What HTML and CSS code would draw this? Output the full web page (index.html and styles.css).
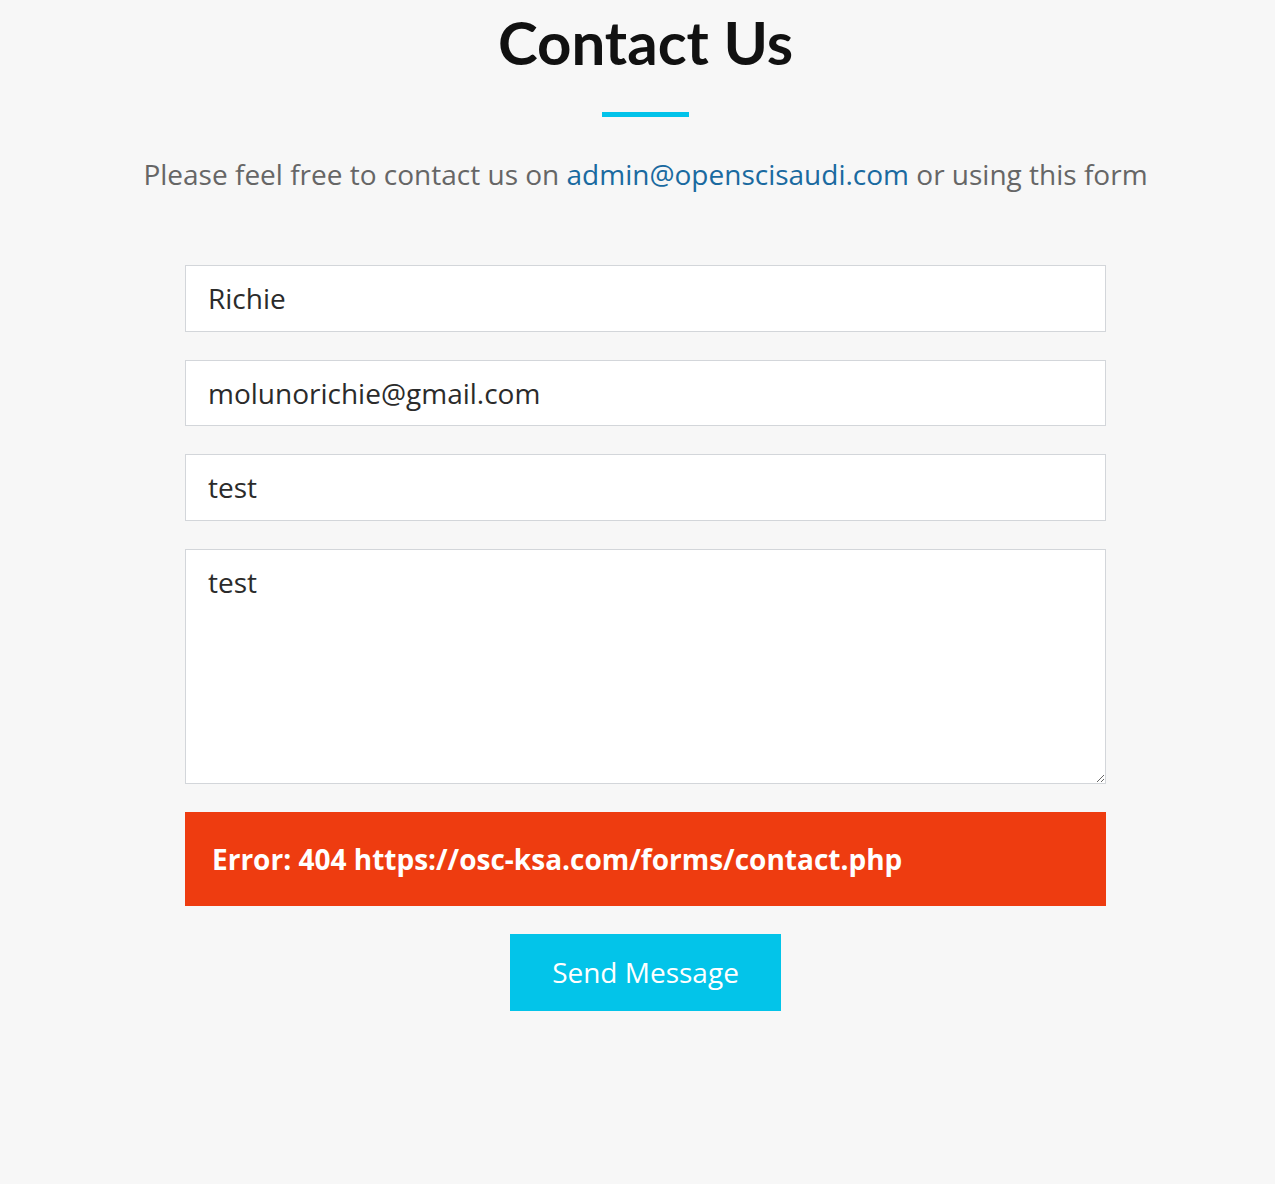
FILE: index.html
```html
<!DOCTYPE html>
<html lang="en">
<head>
<meta charset="utf-8">
<title>Contact Us</title>
<link rel="stylesheet" href="styles.css">
</head>
<body>
<main class="page">
  <section class="contact">
    <h1 class="contact-title">Contact Us</h1>
    <div class="title-bar"></div>
    <p class="contact-lead">Please feel free to contact us on <a class="contact-link" href="#">admin@openscisaudi.com</a> or using this form</p>
    <form class="contact-form">
      <input class="field" type="text" value="Richie">
      <input class="field" type="email" value="molunorichie@gmail.com">
      <input class="field" type="text" value="test">
      <textarea class="field field-area">test</textarea>
      <div class="form-error">Error: 404 https://osc-ksa.com/forms/contact.php</div>
      <div class="form-actions">
        <button class="send-btn" type="button">Send Message</button>
      </div>
    </form>
  </section>
</main>
</body>
</html>
```

FILE: styles.css
```css
* { box-sizing: border-box; }
html, body { margin: 0; padding: 0; }
body {
  background: #f7f7f7;
  font-family: "Open Sans", "Liberation Sans", sans-serif;
  color: #333;
  min-height: 1184px;
}
.page {
  padding-left: 16px;
}
.contact {
  display: flex;
  flex-direction: column;
  align-items: center;
  text-align: center;
}
.contact-title {
  font-family: Lato, "Open Sans", sans-serif;
  font-weight: 700;
  font-size: 60px;
  line-height: 72px;
  margin: 6px 0 0;
  color: #111;
  letter-spacing: 0;
}
.title-bar {
  width: 87px;
  height: 5px;
  background: #02c3ea;
  margin-top: 34px;
}
.contact-lead {
  font-size: 28px;
  line-height: 40px;
  color: #666;
  margin: 37px 0 0;
}
.contact-link {
  color: #1a6aa0;
  text-decoration: none;
}
.contact-form {
  width: 921px;
  margin-top: 71px;
  display: flex;
  flex-direction: column;
  gap: 28px;
  align-items: stretch;
}
.field {
  display: block;
  width: 100%;
  height: 66.5px;
  border: 1px solid #d3d6da;
  background: #fff;
  padding: 0 22px;
  font-family: "Open Sans", sans-serif;
  font-size: 28px;
  color: #2b2b2b;
  outline: none;
  margin: 0;
}
.field-area {
  height: 235px;
  padding-top: 12px;
  resize: vertical;
  line-height: 40px;
}
.form-error {
  height: 94px;
  background: #ee3c10;
  color: #fff;
  font-weight: 700;
  font-size: 28px;
  text-align: left;
  display: flex;
  align-items: center;
  padding: 0 27px;
}
.form-actions {
  display: flex;
  justify-content: center;
}
.send-btn {
  width: 271px;
  height: 77px;
  border: 0;
  background: #03c4e9;
  color: #fff;
  font-family: "Open Sans", sans-serif;
  font-size: 28px;
  cursor: pointer;
}
```
